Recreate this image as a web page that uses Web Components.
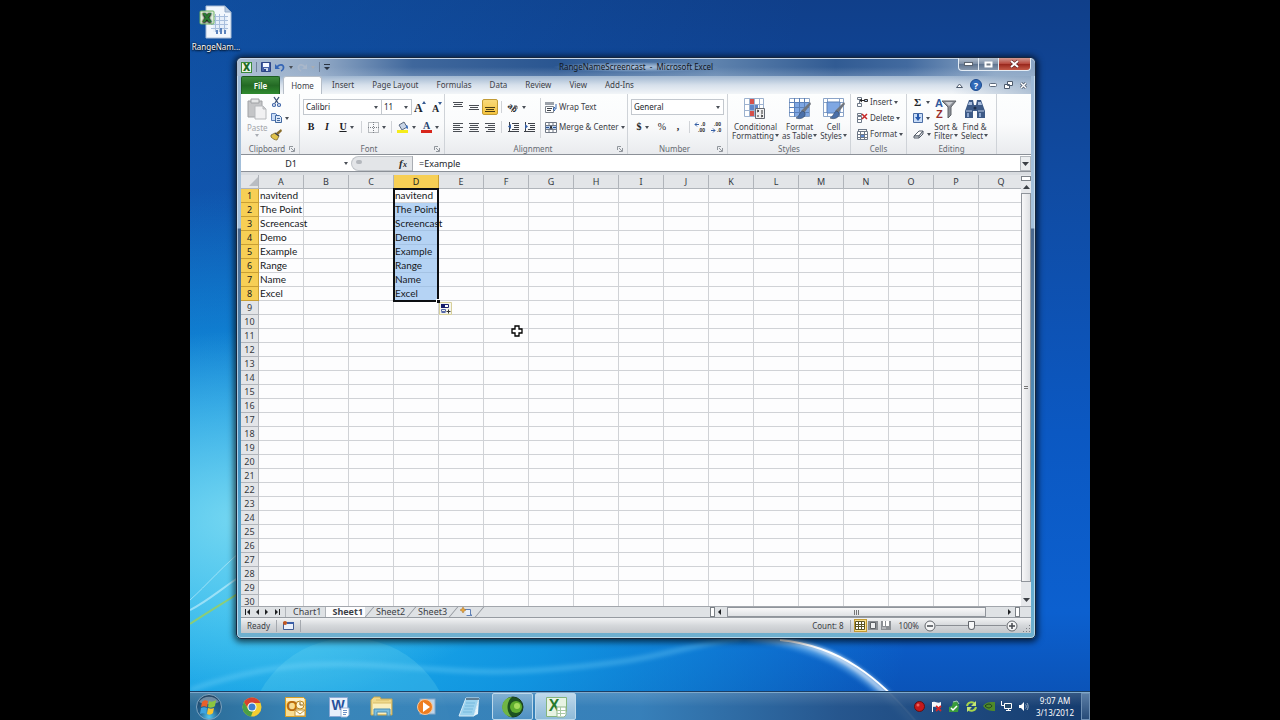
<!DOCTYPE html>
<html lang="en">
<head>
<meta charset="utf-8">
<meta name="viewport" content="width=device-width, initial-scale=1">
<title>RangeNameScreencast - Microsoft Excel</title>
<style>
html, body {
  height: 100%;
  margin: 0;
  background: #000;
  overflow: hidden;
}
body {
  display: flex;
  justify-content: center;
  font-family: "Noto Sans", "Open Sans", sans-serif;
  font-size: 8px;
  line-height: 10px;
  color: #3c4046;
}
</style>
</head>
<body>
<desk-top>
  <desk-shortcut icon="xlsfile">RangeNam...</desk-shortcut>
  <app-window slot="window">
    <title-bar slot="title">RangeNameScreencast &nbsp;-&nbsp; Microsoft Excel</title-bar>
    <ribbon-tabs></ribbon-tabs>
    <excel-ribbon></excel-ribbon>
    <formula-bar></formula-bar>
    <sheet-grid></sheet-grid>
    <sheet-tabs></sheet-tabs>
    <status-bar></status-bar>
  </app-window>
  <task-bar slot="taskbar"></task-bar>
</desk-top>

<script>
// name: [width, height, svg body]
const lines = (color, ...rows) => `<path stroke="${color}" fill="none" d="${rows.join("")}"/>`;
const icons = {
  caret: [4, 3, `<path d="M0 0h4L2 3z" fill="#4a4f57"/>`],
  caretPale: [4, 3, `<path d="M0 0h4L2 3z" fill="#a9adb3"/>`],
  xlsfile: [34, 36, `<path d="M7 2h19l6 6v26H7z" fill="#f2f7fd" stroke="#a9bdd6"/><path d="M26 2v6h6z" fill="#b9cbe2" stroke="#94abc8"/>
    <path d="M14 12h14v16H14z" fill="#e6effa"/>${lines("#a9bfdd", "M12 12.500h17M12 16.500h17M12 20.500h17M12 24.500h17M16.500 10v18M20.500 10v18M25.500 10v18")}
    <path d="M17 30v-4h2v4M21 30v-6h2v6M25 30v-4h2v4" fill="#5b83bd"/>
    <rect x="1" y="7" width="14" height="13" rx="1" fill="#e4f3de" stroke="#6aae60"/><text x="8" y="18" font-size="13" font-weight="900" text-anchor="middle" fill="#2c7a33">X</text>`],
  excel: [11, 11, `<rect x=".5" y=".5" width="10" height="10" fill="#e9f4e4" stroke="#3b8a3b"/><text x="5.500" y="9" font-size="10" font-weight="900" text-anchor="middle" fill="#1d6a24">X</text>`],
  save: [10, 10, `<path d="M.5.5h9v9h-9z" fill="#4661a8" stroke="#2d4585"/><path d="M2 1h6v4H2z" fill="#f4f8ff"/><path d="M3 6h4v3H3z" fill="#cdd7ea"/><path d="M3 7h2v2H3z" fill="#2d4585"/>`],
  undo: [10, 9, `<path d="M2 4c2-3 7-3 6.500 1-.2 1.500-1 2.500-2.500 3" fill="none" stroke="#3566b5" stroke-width="1.800"/><path d="M0 1v5h5z" fill="#3566b5"/>`],
  redo: [10, 9, `<path d="M8 4c-2-3-7-3-6.500 1 .2 1.500 1 2.500 2.500 3" fill="none" stroke="#a9b7ca" stroke-width="1.800"/><path d="M10 1v5H5z" fill="#a9b7ca"/>`],
  customize: [6, 6, `<path d="M0 0h6v1H0zM0 3h6L3 6z" fill="#2a3442"/>`],
  paste: [20, 22, `<path d="M1 3h14v16H1z" fill="#c4c5c7" stroke="#a0a2a5"/><path d="M4 1h8v4H4z" fill="#e6e7e8" stroke="#a0a2a5"/><path d="M8 8h8l3 3v10H8z" fill="#f1f1f2" stroke="#b7b9bc"/><path d="M16 8v3h3z" fill="#cfd0d2" stroke="#b7b9bc"/>`],
  cut: [9, 10, `<path d="M2 0l4 6M7 0L3 6" stroke="#3a4f74" stroke-width="1.300"/><circle cx="2" cy="8" r="1.500" fill="none" stroke="#3a61a6" stroke-width="1.200"/><circle cx="7" cy="8" r="1.500" fill="none" stroke="#3a61a6" stroke-width="1.200"/>`],
  copy: [11, 10, `<path d="M.5.500h4l2 2v5h-6z" fill="#c9dcf6" stroke="#5c7fb8"/><path d="M4.500 2.500h4l2 2v5h-6z" fill="#dbe7f8" stroke="#41689f"/><path d="M6 5.500h3M6 7.500h3" stroke="#41689f"/>`],
  brush: [11, 11, `<path d="M10 0l1 2-4 4-2-2z" fill="#8a6d2a"/><path d="M0 6l4-2 4 3-2 4c-2 0-4-1-6-3z" fill="#e0c24b" stroke="#7c6a30" stroke-width=".8"/><path d="M4 4l4 3" stroke="#444" stroke-width="1.500"/>`],
  launcher: [6, 6, `<path d="M.5 4V.5H4M5.500 2v3.500H2M2 2l3 3" fill="none" stroke="#868b92" stroke-width=".9"/>`],
  grow: [12, 12, `<text x="0" y="11" font-size="12" font-weight="700" font-family="Liberation Serif, serif" fill="#22262b">A</text><path d="M8 3l2-3 2 3z" fill="#355a92"/>`],
  shrink: [11, 12, `<text x="1" y="11" font-size="10" font-weight="700" font-family="Liberation Serif, serif" fill="#22262b">A</text><path d="M7 1h4L9 4z" fill="#355a92"/>`],
  border: [11, 11, `<path d="M.5.500h10v10H.5zM5.500 0v11M0 5.500h11" fill="none" stroke="#7b8087" stroke-dasharray="1 1"/>`],
  fill: [12, 12, `<path d="M2 4l5-3 3 5-5 3z" fill="#c7d4e6" stroke="#5c6b80"/><path d="M9 4c2 0 2 2 2 4l-2-1z" fill="#3d6fbb"/><path d="M0 9h11v3H0z" fill="#f5ec1c"/>`],
  fontcolor: [11, 12, `<text x="5.500" y="8" font-size="10" font-weight="700" font-family="Liberation Serif, serif" text-anchor="middle" fill="#27456f">A</text><path d="M0 9h11v3H0z" fill="#d8261c"/>`],
  top: [10, 10, lines("#4a4e54", "M0 .5h10M1 2.500h8M0 4.500h10")],
  middle: [10, 10, lines("#4a4e54", "M0 3.500h10M1 5.500h8M0 7.500h10")],
  bottom: [10, 10, lines("#4a3c14", "M0 5.500h10M1 7.500h8M0 9.500h10")],
  left: [10, 10, lines("#4a4e54", "M0 1.500h10M0 3.500h7M0 5.500h10M0 7.500h7M0 9.500h9")],
  center: [10, 10, lines("#4a4e54", "M0 1.500h10M1 3.500h8M0 5.500h10M1 7.500h8M0 9.500h10")],
  right: [10, 10, lines("#4a4e54", "M0 1.500h10M3 3.500h7M0 5.500h10M3 7.500h7M1 9.500h9")],
  orient: [11, 10, `<text x="0" y="8" font-size="8" font-weight="700" transform="rotate(40 4 5)" fill="#2c3036">ab</text><path d="M3 10l6-6M9 4v3M9 4H6" stroke="#666" fill="none"/>`],
  outdent: [11, 10, lines("#3d4148", "M4 1.500h7M6 3.500h5M6 5.500h5M4 7.500h7M0 9.500h11M1.500 0v9") + `<path d="M0 4.500L3 2v5z" fill="#355fa5"/>`],
  indent: [11, 10, lines("#3d4148", "M4 1.500h7M6 3.500h5M6 5.500h5M4 7.500h7M0 9.500h11M1.500 0v9") + `<path d="M4 4.500L1 2v5z" fill="#355fa5"/>`],
  wrap: [12, 11, `<path d="M0 0h9v3H0z" fill="#9ca2aa"/><path d="M.5 4.500h8v6h-8z" fill="#fff" stroke="#7c838c"/><path d="M2 6.500h5M2 8.500h4" stroke="#3c4046"/><path d="M11 2v5H8M10 5L8 7l2 2" fill="none" stroke="#3667b1"/>`],
  merge: [12, 11, `<path d="M.5.5h11v10H.5z" fill="#fff" stroke="#717985"/><path d="M0 3.500h12M0 7.500h12M4 1v2M8 1v2M4 8v2M8 8v2" stroke="#717985"/><path d="M1 4h10v3H1z" fill="#bcd2ef"/><path d="M1 5.500h3M8 5.500h3" stroke="#244f94"/><path d="M5 7l1-3 1 3" stroke="#222" fill="none"/>`],
  moredec: [12, 12, `<path d="M0 3.500h4M2 1.500L0 3.500l2 2" stroke="#355fa5" fill="none"/><g font-family="Liberation Sans, sans-serif" font-size="5" font-weight="700" fill="#222"><text x="6" y="5">.0</text><text x="3" y="11">.00</text></g>`],
  lessdec: [12, 12, `<path d="M0 9.500h4M2 7.500l2 2-2 2" stroke="#355fa5" fill="none"/><g font-family="Liberation Sans, sans-serif" font-size="5" font-weight="700" fill="#222"><text x="3" y="5">.00</text><text x="6" y="11">.0</text></g>`],
  conditional: [22, 21, `<path d="M.5.500h19v18H.5z" fill="#fff" stroke="#9db2cf"/><path d="M5 1h6v5H5zM5 12h6v6H5z" fill="#d5504a"/><path d="M5 6h9v6H5z" fill="#5f86c9"/>${lines("#9db2cf", "M0 6.500h20M0 12.500h20M5.500 0v19M10.500 0v19M15.500 0v19")}<path d="M11.500 10.500h9v10h-9z" fill="#f1f1f1" stroke="#656a72"/><path d="M13 12l2 1-2 1M17 13h2M17 15h2M13 18h2M17 17l2 1-2 1" stroke="#333" fill="none"/>`],
  table: [22, 21, `<path d="M.5.500h20v18H.5z" fill="#fff" stroke="#8ba4c8"/><path d="M5 5h15v13H5z" fill="#7fa7e3"/>${lines("#5b80b8", "M0 4.500h20M0 9.500h20M0 14.500h20M5.500 0v19M10.500 0v19M15.500 0v19")}<path d="M21 4l1 2-7 9-3-2z" fill="#70757d"/><path d="M14 13c-3 0-3 5-7 7 5 2 10-1 9-5z" fill="#4a6fa8" stroke="#3a4a60" stroke-width=".6"/>`],
  cellstyle: [22, 21, `<path d="M.5.500h20v18H.5z" fill="#fff" stroke="#8ba4c8"/><path d="M0 4.500h20M0 14.500h20M4.500 0v19M16.500 0v19" stroke="#8ba4c8"/><path d="M4 4h13v11H4z" fill="#7fa7e3" stroke="#5b80b8"/><path d="M21 4l1 2-7 9-3-2z" fill="#70757d"/><path d="M14 13c-3 0-3 5-7 7 5 2 10-1 9-5z" fill="#4a6fa8" stroke="#3a4a60" stroke-width=".6"/>`],
  insert: [11, 10, `<path d="M.5.500h4v2h-4zM.5 6.500h4v3h-4z" fill="#fff" stroke="#6d7887"/><path d="M2.500 2v5" stroke="#6d7887"/><path d="M7.500 2.500h3v2h-3z" fill="#bcd2ef" stroke="#333"/><path d="M3 3.500h4M5 2L3 3.500 5 5" fill="none" stroke="#222"/>`],
  delete: [11, 10, `<path d="M.5.500h4v2h-4zM.5 3.500h4v3h-4zM.5 6.500h4v3h-4z" fill="#fff" stroke="#6d7887"/><path d="M5 1l5 5M10 1L5 6" stroke="#c62626" stroke-width="1.500"/>`],
  format: [11, 11, `<path d="M.5 2.500h10v8H.5z" fill="#fff" stroke="#6d7887"/><path d="M0 5.500h11M0 8.500h11M3.500 2v9M7.500 2v9M1 .5h9M1.500 0v2M9.500 0v2" stroke="#6d7887"/><path d="M4 6h3v2H4z" fill="#5e8ad0"/>`],
  sum: [9, 10, `<text x="0" y="9" font-size="11" font-weight="700" font-family="Liberation Serif, serif" fill="#22262b">Σ</text>`],
  filldown: [10, 10, `<path d="M.5.500h9v9h-9z" fill="#c8dcf7" stroke="#4a6da5"/><path d="M4 1h2v3h2L5 8 2 4h2z" fill="#2659ad"/>`],
  erase: [11, 9, `<path d="M1 6l5-5h4L6 6z" fill="#fff" stroke="#555d69"/><path d="M1 6h5v2H1zM6 6l4-5v3L6 8" fill="#e3e6ea" stroke="#555d69"/>`],
  sort: [22, 21, `<path d="M7 3h14l-5 6v8l-3 3V9z" fill="#8c9097" stroke="#5f6369"/><path d="M10 4h8l-4 4z" fill="#c9ccd1"/><text x="0" y="9" font-size="11" font-weight="700" font-family="Liberation Sans, sans-serif" fill="#31599c">A</text><text x="1" y="20" font-size="11" font-weight="700" font-family="Liberation Sans, sans-serif" fill="#99302d">Z</text>`],
  find: [20, 21, `<path d="M4 2h4l1 5h2l1-5h4l4 11v7h-8v-7h-4v7H0v-7z" fill="#3e5b87"/><path d="M4 4h3v3H3zM13 4h3l1 3h-4z" fill="#a8bdde"/><path d="M1 13h6M13 13h6" stroke="#bccbe3"/><path d="M2 15h2v4H2zM14 15h2v4h-2z" fill="#8ba5ce"/><circle cx="10" cy="10" r="1.500" fill="#1d2f4c"/>`],
  chevronUp: [7, 5, `<path d="M.5 4.500L3.500 1l3 3.500z" fill="#fff" stroke="#4d5a6c"/>`],
  help: [12, 12, `<circle cx="6" cy="6" r="5.500" fill="#2f69b8" stroke="#1c4a8e"/><text x="6" y="9.500" font-size="9" font-weight="700" text-anchor="middle" fill="#fff">?</text>`],
  docMin: [8, 4, `<rect x=".5" y=".5" width="7" height="3" rx="1" fill="#fff" stroke="#5c6a7d"/>`],
  docRestore: [9, 8, `<path d="M3.500.5h5v4h-5zM.5 3.500h5v4h-5z" fill="#fff" stroke="#4d5a6c"/>`],
  docClose: [7, 7, `<path d="M1 1l5 5M6 1L1 6" stroke="#4d5a6c" stroke-width="3"/><path d="M1 1l5 5M6 1L1 6" stroke="#fff" stroke-width="1.400"/>`],
  winMin: [9, 4, `<rect x=".5" y=".5" width="8" height="3" fill="#fff" stroke="#5b6470"/>`],
  winMax: [9, 7, `<path d="M1.500 1.500h6v4h-6z" fill="#717a86" stroke="#fff" stroke-width="2"/>`],
  winClose: [9, 8, `<path d="M1 1l7 6M8 1L1 7" stroke="#5b2020" stroke-width="3"/><path d="M1 1l7 6M8 1L1 7" stroke="#fff" stroke-width="2"/>`],
  fx: [10, 10, `<text x="0" y="8" font-size="11" font-weight="700" font-style="italic" font-family="Liberation Serif, serif" fill="#26292d">f</text><text x="4" y="8" font-size="8" font-weight="700" font-style="italic" font-family="Liberation Serif, serif" fill="#26292d">x</text>`],
  corner: [9, 9, `<path d="M9 0v9H0z" fill="#b9bdc2"/>`],
  autofill: [13, 13, `<path d="M.5.500h12v12H.5z" fill="#f6f6ee" stroke="#d6cf9a"/><path d="M2.500 2.500h3v3h-3zM5.500 2.500h4v3h-4z" fill="#fff" stroke="#1b246e"/><path d="M2 2h4v4H2z" fill="#141c6c"/><path d="M2.500 7.500h4v2h-4zM2.500 10.500h4" fill="none" stroke="#5768a7"/><path d="M9.500 7.500v4M7.500 9.500h4" stroke="#333"/>`],
  cross: [12, 12, `<path d="M4 1h4v3h3v4H8v3H4V8H1V4h3z" fill="#fff" stroke="#000" stroke-width="1.300"/>`],
  first: [6, 6, `<path d="M0 0h1v6H0zM5 0v6L2 3z" fill="#1d1f22"/>`],
  prev: [4, 6, `<path d="M3 0v6L0 3z" fill="#1d1f22"/>`],
  next: [4, 6, `<path d="M0 0v6l3-3z" fill="#1d1f22"/>`],
  last: [6, 6, `<path d="M5 0h1v6H5zM1 0v6l3-3z" fill="#1d1f22"/>`],
  up: [7, 4, `<path d="M0 4h7L3.500 0z" fill="#3c4046"/>`],
  down: [7, 4, `<path d="M0 0h7L3.500 4z" fill="#3c4046"/>`],
  newsheet: [13, 10, `<path d="M4.500 2.500h6v6h-4" fill="#e9f0fb" stroke="#5e7fb4"/><path d="M10 9l2-2v2z" fill="#5e7fb4"/><path d="M3 0l1 2 2 1-2 1-1 2-1-2-2-1 2-1z" fill="#e6a33c" stroke="#a86d1a" stroke-width=".5"/>`],
  macro: [11, 9, `<path d="M.5 1.500h10v7H.5z" fill="#eaf0fb" stroke="#405c93"/><path d="M4 1h7v2H4z" fill="#3a5ea8"/><circle cx="2" cy="2" r="2" fill="#c1551f"/>`],
  normal: [10, 9, `<path d="M.5.500h9v8h-9z" fill="#fff" stroke="#5b5423"/><path d="M0 3.500h10M0 5.500h10M3.500 0v9M6.500 0v9" stroke="#5b5423"/>`],
  layout: [10, 9, `<path d="M0 0h10v9H0z" fill="#8b8f94"/><path d="M2.500 1.500h5v6h-5z" fill="#eceef0" stroke="#5c6066"/>`],
  breaks: [10, 9, `<path d="M0 0h10v9H0z" fill="#8b8f94"/><path d="M2 0h2v5H2zM5 0h3v5H5z" fill="#fff"/><path d="M1 7h4" stroke="#d9dbde"/>`],
  minus: [12, 12, `<circle cx="6" cy="6" r="5" fill="#f4f5f6" stroke="#62666c"/><path d="M3 6h6" stroke="#44484e" stroke-width="1.500"/>`],
  plus: [12, 12, `<circle cx="6" cy="6" r="5" fill="#f4f5f6" stroke="#62666c"/><path d="M3 6h6M6 3v6" stroke="#44484e" stroke-width="1.500"/>`],
  grip: [8, 8, `<path d="M6 0h1v1H6zM3 3h1v1H3zM6 3h1v1H6zM0 6h1v1H0zM3 6h1v1H3zM6 6h1v1H6z" fill="#7c8086"/>`],
  start: [28, 28, `<defs><radialGradient id="o" cx=".5" cy=".9" r=".9"><stop offset="0" stop-color="#53c7ef"/><stop offset=".45" stop-color="#22618f"/><stop offset="1" stop-color="#24435f"/></radialGradient></defs>
    <circle cx="14" cy="14" r="12.500" fill="url(#o)" stroke="#7da3c0"/><path d="M4 9c4-7 16-7 20 0-6 3-14 3-20 0z" fill="#fff" opacity=".35"/>
    <path d="M7 9c2-2 4-2 6-1l-1 6c-2-1-4-1-6 0z" fill="#e8602b"/><path d="M14 8c2 1 4 1 7-1l-1 6c-2 2-5 2-7 1z" fill="#8cc63f"/><path d="M6 15c2-1 4-1 6 0l-1 6c-2-1-4-1-6 0z" fill="#3fa4e0"/><path d="M13 15c2 1 4 1 6 0l-1 5c-2 2-4 2-6 1z" fill="#fcc52c"/>`],
  chrome: [20, 20, `<circle cx="10" cy="10" r="9.500" fill="#f3cd33"/><path d="M10 .5A9.500 9.500 0 0 1 18.500 6H10a4 4 0 0 0-4 6L2 5A9.500 9.500 0 0 1 10 .5z" fill="#d8402f"/><path d="M2 5l4 7a4 4 0 0 0 5 2l-2 5.500A9.500 9.500 0 0 1 2 5z" fill="#4a9f45"/><circle cx="10" cy="10" r="4.500" fill="#fff"/><circle cx="10" cy="10" r="3.500" fill="#3e7fd0"/>`],
  outlook: [22, 22, `<path d="M1.500 1.500h18l2 2v17h-20z" fill="#f8dc92" stroke="#d89f26"/><path d="M2 2h18v3H2z" fill="#fdf0c8"/><text x="8" y="15" font-size="15" font-weight="900" text-anchor="middle" fill="#b96c0d">O</text><circle cx="16" cy="9" r="4" fill="#fff4d2" stroke="#bb8822"/><path d="M16 6v3h3" stroke="#8a6318" fill="none"/><path d="M11 14h10v6H11z" fill="#fffbea" stroke="#c3963b"/><path d="M11 14l5 4 5-4" fill="none" stroke="#c3963b"/>`],
  word: [22, 22, `<path d="M1.500 1.500h18v14l-5 5h-13z" fill="#e8f0fb" stroke="#8ba8d4"/><text x="10" y="14" font-size="14" font-weight="900" text-anchor="middle" fill="#26509c">W</text><path d="M13 12h8v7l-2 2h-6z" fill="#fff" stroke="#9db4d8"/><path d="M15 14.500h4M15 16.500h4M15 18.500h3" stroke="#6f91c5"/>`],
  explorer: [24, 22, `<path d="M1 4l3-3h6l1 2h11v16H1z" fill="#efd98b" stroke="#c7a751"/><path d="M3 7h18v11H3z" fill="#faefbd"/><path d="M3 7h18M6 4h13" stroke="#d7bd6b"/><path d="M4 20v-7h16v7h-3v-4H7v4z" fill="#79bddf" stroke="#4c8eb3"/>`],
  media: [20, 20, `<rect x="4" y="2" width="15" height="15" fill="#bdd5ea" stroke="#86a9c9"/><circle cx="9" cy="10" r="7.500" fill="#ee7d1f" stroke="#f7c79a"/><path d="M7 5l7 5-7 5z" fill="#fff"/>`],
  notepad: [22, 22, `<path d="M8 2h13l-5 18H1z" fill="#9bd2ee" stroke="#d8edf7"/><path d="M8 2h13v2H8z" fill="#5f7d92"/><path d="M21 3l-1 15-4 2z" fill="#e9f5fb"/><path d="M8 7h9M7 10h9M6 13h9M5 16h9" stroke="#6cb2d8" stroke-width=".8"/>`],
  camtasia: [22, 22, `<circle cx="11" cy="11" r="10" fill="#1d5320" stroke="#183d1a"/><path d="M10 1a10 10 0 0 0 0 20C4 16 4 6 10 1z" fill="#6fb544"/><circle cx="14" cy="11" r="6" fill="#5fae2f"/><circle cx="15" cy="10" r="3" fill="#a5dc5c"/>`],
  exceltask: [22, 22, `<path d="M1.500 1.500h20v14l-5 5h-15z" fill="#e7f3e3" stroke="#84b57d"/><text x="9" y="15" font-size="16" font-weight="900" text-anchor="middle" fill="#277a2e">X</text><path d="M12 11h9v8l-2 2h-7z" fill="#fff" stroke="#8fb68a"/><path d="M12 14.500h9M12 17.500h8M15.500 11v9" stroke="#a9c9a5"/>`],
  record: [11, 11, `<circle cx="5.500" cy="5.500" r="5" fill="#c5191b" stroke="#5e1014"/><circle cx="4" cy="4" r="1.500" fill="#ea6560"/>`],
  flag: [11, 11, `<path d="M1.500 1v10" stroke="#fff"/><path d="M2 1c3-1 4 2 8 0v5c-4 2-5-1-8 0z" fill="#f5f7f9"/><path d="M5 5l5 5M10 5l-5 5" stroke="#d22525" stroke-width="1.800"/>`],
  usb: [12, 12, `<path d="M1 6l3-1 1-4h4l2 4-1 6H1z" fill="#3a9c3b"/><path d="M5 1l4-1 2 3" fill="none" stroke="#a9d7ac"/><path d="M3 7l2 2 4-4" stroke="#fff" fill="none" stroke-width="1.500"/>`],
  sync: [11, 11, `<path d="M1 5a4.500 4.500 0 0 1 8-2M10 6a4.500 4.500 0 0 1-8 2" fill="none" stroke="#a8d64a" stroke-width="2"/><path d="M10 0v5H5zM1 11V6h5z" fill="#c4e577"/>`],
  nvidia: [12, 9, `<path d="M0 4c3-4 6-4 12-4v9C6 9 3 8 0 4z" fill="#4f8a2a"/><path d="M2 4c3-3 6-2 7 0-2 3-5 2-7 0z" fill="none" stroke="#1d3f1e"/>`],
  network: [11, 11, `<path d="M3.500 2.500h7v5h-7z" fill="#274a6c" stroke="#fff"/><path d="M5 9.500h5M7.500 8v2M.5 0v4.500h3" stroke="#fff" fill="none"/>`],
  sound: [10, 11, `<path d="M1 4h2l3-3v9L3 7H1z" fill="#fff"/><path d="M7.500 3.500c1 1 1 3 0 4M9 2c1.500 2 1.500 5 0 7" stroke="#b9c7d6" fill="none" stroke-width=".8"/>`],
};

class AppElement extends HTMLElement {
  constructor() {
    super();
    this.attachShadow({ mode: "open" });
  }

  connectedCallback() {
    this.shadowRoot.innerHTML = this.render();
  }

  render() {
    return `<slot></slot>`;
  }
}

class AppIcon extends AppElement {
  render() {
    const [w, h, body] = icons[this.getAttribute("name")];
    return `
<style>
:host { display: inline-flex; flex: none; }
svg { display: block; overflow: visible; }
</style>
<svg width="${w}" height="${h}" viewBox="0 0 ${w} ${h}" aria-hidden="true">${body}</svg>`;
  }
}
customElements.define("app-icon", AppIcon);

class DeskTop extends AppElement {
  render() {
    return `
<style>
:host {
  display: flex;
  flex-direction: column;
  position: relative;
  height: 100vh;
  aspect-ratio: 5 / 4;
  overflow: hidden;
  background:
    radial-gradient(ellipse 34% 26% at 6% 72%, #8ce4f4cc, transparent),
    radial-gradient(ellipse 72% 58% at 8% 84%, #1db2ec, #12a2e8cc 45%, transparent),
    linear-gradient(100deg, #0f64bd66, transparent 60%),
    linear-gradient(#103f8a, #104ba2 25%, #0b58c2 60%, #0c60cf 85%, #0a4fb0);
}
.wallpaper {
  position: absolute;
  inset: 0;
  width: 100%;
  height: 100%;
}
.icons { flex: 1; position: relative; padding: 4px 2px; }
.windows { position: absolute; inset: 57px 54px 81px 46px; display: flex; }
.pointer { position: absolute; left: 321px; top: 325px; }
</style>
<svg class="wallpaper" viewBox="0 0 900 720" preserveAspectRatio="none" aria-hidden="true">
  <defs>
    <filter id="soft"><feGaussianBlur stdDeviation="2"/></filter>
    <linearGradient id="arc"><stop offset="0" stop-color="#fff" stop-opacity=".1"/><stop offset=".5" stop-color="#fff"/><stop offset="1" stop-color="#fff" stop-opacity=".5"/></linearGradient>
  </defs>
  <circle cx="160" cy="740" r="102" fill="#7fe2ee" opacity=".2"/>
  <path d="M500 632c130 0 180 40 230 100" fill="none" stroke="#8fd0ff" stroke-width="10" opacity=".4" filter="url(#soft)"/>
  <path d="M560 638c80 0 122 36 170 92" fill="none" stroke="url(#arc)" stroke-width="4" filter="url(#soft)"/>
  <path d="M590 640c60 6 100 38 138 84" fill="none" stroke="#fff" stroke-width="2"/>
  <path d="M0 690c140-50 220-10 350-20s120-20 200-32" fill="none" stroke="#8fe2ff" stroke-width="5" opacity=".3" filter="url(#soft)"/>
  <path d="M0 624c18-12 32-20 60-38" fill="none" stroke="#9ccf5a" stroke-width="2" opacity=".8"/>
  <path d="M0 610c20-10 34-24 60-40" fill="none" stroke="#e6fbff" stroke-width="2" opacity=".5"/>
  <path d="M0 600c16-14 34-36 60-56" fill="none" stroke="#e6fbff" opacity=".5"/>
</svg>
<div class="icons"><slot></slot></div>
<div class="windows"><slot name="window"></slot></div>
<slot name="taskbar"></slot>
<app-icon class="pointer" name="cross"></app-icon>`;
  }
}
customElements.define("desk-top", DeskTop);

class DeskShortcut extends AppElement {
  render() {
    return `
<style>
:host { display: block; width: 48px; }
a {
  display: flex;
  flex-direction: column;
  align-items: center;
  gap: 2px;
  color: #fff;
  text-decoration: none;
  text-shadow: 0 1px 2px #000, 0 0 2px #000;
}
</style>
<a href="#file"><app-icon name="${this.getAttribute("icon")}"></app-icon><span><slot></slot></span></a>`;
  }
}
customElements.define("desk-shortcut", DeskShortcut);

class AppWindow extends AppElement {
  render() {
    return `
<style>
:host {
  display: flex;
  flex-direction: column;
  flex: 1;
  min-width: 0;
  box-sizing: border-box;
  padding: 0 4px 5px;
  border: 1px solid #16263c;
  border-radius: 6px 6px 5px 5px;
  background:
    linear-gradient(#0000 2px, #0000 170px, #0c2c5a99 171px, #1c78a800 80%),
    linear-gradient(#9db9d6, #a6c2dc 30%, #4a9fd0 70%, #6fb0cf);
  box-shadow: inset 0 0 0 1px #dcecf8aa, 0 1px 6px 2px #000a;
}
::slotted(sheet-grid) { flex: 1; min-height: 0; }
</style>
<slot name="title"></slot>
<slot></slot>`;
  }
}
customElements.define("app-window", AppWindow);

class TitleBar extends AppElement {
  render() {
    return `
<style>
:host {
  display: flex;
  align-items: center;
  height: 18px;
  margin: 0 -4px;
  padding: 0 4px;
  border-radius: 5px 5px 0 0;
  box-shadow: inset 0 1px #c6d6e8;
  color: #10151c;
  background:
    linear-gradient(transparent 50%, #a9bdd555),
    linear-gradient(90deg, #aebfd3, #94abc7 10%, #3f679c 22%, #2a5691 40%, #5e82ad 60%, #315b93 75%, #426a9f 84%, #8aa5c4 95%);
}
.quick { display: flex; align-items: center; gap: 4px; flex: 1; }
.sep { width: 1px; height: 10px; background: #6e8099; }
h1 {
  margin: 0;
  padding: 0 6px;
  font: inherit;
  background: radial-gradient(closest-side, #c4d5e8dd, #8faccd88 70%, transparent);
}
.caption { flex: 1; display: flex; justify-content: flex-end; align-self: flex-start; }
button { display: flex; align-items: center; justify-content: center; border: 0; padding: 0; background: none; }
.caption button {
  width: 20px;
  height: 13px;
  border: 1px solid #e3ecf5;
  border-top: 0;
  border-right: 0;
  background: linear-gradient(#b4c0cf, #7d8ea5 50%, #5e738f 51%, #8798ad);
}
.caption button:first-child { border-radius: 0 0 0 4px; }
.caption .close {
  width: 33px;
  border-right: 1px solid #e3ecf5;
  border-radius: 0 0 4px;
  background: linear-gradient(#d29a92, #b5453a 50%, #98261c 51%, #c35a48);
}
</style>
<div class="quick">
  <app-icon name="excel"></app-icon><span class="sep"></span>
  <button aria-label="Save"><app-icon name="save"></app-icon></button>
  <button aria-label="Undo"><app-icon name="undo"></app-icon></button><app-icon name="caret"></app-icon>
  <button aria-label="Redo"><app-icon name="redo"></app-icon></button><app-icon name="caretPale"></app-icon>
  <span class="sep"></span>
  <button aria-label="Customize Quick Access Toolbar"><app-icon name="customize"></app-icon></button>
</div>
<h1><slot></slot></h1>
<div class="caption">
  <button aria-label="Minimize"><app-icon name="winMin"></app-icon></button>
  <button aria-label="Maximize"><app-icon name="winMax"></app-icon></button>
  <button class="close" aria-label="Close"><app-icon name="winClose"></app-icon></button>
</div>`;
  }
}
customElements.define("title-bar", TitleBar);

class RibbonTabs extends AppElement {
  render() {
    const tabs = ["Insert", "Page Layout", "Formulas", "Data", "Review", "View", "Add-Ins"];
    return `
<style>
:host {
  display: flex;
  align-items: stretch;
  height: 18px;
  background: linear-gradient(90deg, transparent 90%, #7f9bbb88), linear-gradient(#9fb6d0, #d6e0eb 50%, #f2f5f8);
}
nav { display: flex; flex: 1; }
button { font: inherit; color: inherit; border: 0; padding: 0 9px; background: none; display: flex; align-items: center; }
.file {
  width: 39px;
  justify-content: center;
  color: #fff;
  font-weight: 600;
  border: 1px solid #1d5c20;
  border-bottom: 0;
  border-radius: 2px 2px 0 0;
  background: linear-gradient(#3d8a3c, #236a24 50%, #2f8a2f);
}
.home {
  width: 39px;
  margin: 0 1px 0 3px;
  justify-content: center;
  border: 1px solid #b6bec8;
  border-bottom: 0;
  border-radius: 3px 3px 0 0;
  background: #fdfefe;
}
.tools { display: flex; align-items: center; gap: 7px; padding-right: 4px; }
.tools button { padding: 0; }
</style>
<nav>
  <button class="file">File</button><button class="home">Home</button>
  ${tabs.map((tab) => `<button>${tab}</button>`).join("")}
</nav>
<div class="tools">
  <button aria-label="Minimize the Ribbon"><app-icon name="chevronUp"></app-icon></button>
  <button aria-label="Help"><app-icon name="help"></app-icon></button>
  <button aria-label="Minimize Workbook"><app-icon name="docMin"></app-icon></button>
  <button aria-label="Restore Workbook"><app-icon name="docRestore"></app-icon></button>
  <button aria-label="Close Workbook"><app-icon name="docClose"></app-icon></button>
</div>`;
  }
}
customElements.define("ribbon-tabs", RibbonTabs);

class RibbonGroup extends AppElement {
  render() {
    return `
<style>
:host {
  display: flex;
  flex-direction: column;
  flex: none;
  box-sizing: border-box;
  border-right: 1px solid #cfd3d8;
}
.body { flex: 1; min-height: 0; display: flex; padding: 0 0 0 3px; }
:host([inset]) .body { padding-left: 5px; }
footer { display: flex; height: 11px; align-items: center; padding: 0 4px; color: #666b72; }
footer span { flex: 1; text-align: center; }
</style>
<div class="body"><slot></slot></div>
<footer><span>${this.getAttribute("label")}</span>${this.hasAttribute("launcher") ? `<app-icon name="launcher"></app-icon>` : ""}</footer>`;
  }
}
customElements.define("ribbon-group", RibbonGroup);

// Icon button: small by default, "large" stacks the icon over its label
class RibbonButton extends AppElement {
  render() {
    const caret = this.hasAttribute("caret") ? `<app-icon name="caret"></app-icon>` : "";
    const icon = this.getAttribute("icon");
    return `
<style>
:host { display: inline-flex; flex: none; min-width: 16px; height: 16px; }
:host([caret]) { min-width: 23px; }
:host([active]) button { background: linear-gradient(#f9d97a, #f5c43f); border-color: #c29b35; }
:host([large]) { height: auto; min-width: 0; }
:host([large]) button { flex-direction: column; justify-content: flex-start; gap: 3px; padding: 3px 0 0; line-height: 9px; }
:host([disabled]) { color: #a4a7ab; }
:host([text]) button { justify-content: flex-start; gap: 2px; }
button {
  flex: 1;
  display: flex;
  align-items: center;
  justify-content: center;
  gap: 3px;
  padding: 0;
  border: 1px solid transparent;
  border-radius: 2px;
  background: none;
  font: inherit;
  color: inherit;
  white-space: nowrap;
}
</style>
<button${this.hasAttribute("aria-label") ? ` aria-label="${this.getAttribute("aria-label")}"` : ""}>${icon ? `<app-icon name="${icon}"></app-icon>` : ""}<slot></slot>${caret}</button>`;
  }
}
customElements.define("ribbon-button", RibbonButton);

class DropDown extends AppElement {
  render() {
    return `
<style>
:host { display: flex; position: relative; height: 16px; box-sizing: border-box; border: 1px solid #c3c8ce; background: #fff; color: #22262b; }
select { flex: 1; width: 100%; appearance: none; border: 0; padding: 0 2px; background: none; font: inherit; color: inherit; }
app-icon { position: absolute; right: 3px; top: 6px; pointer-events: none; }
</style>
<select aria-label="${this.getAttribute("label")}"><option>${this.textContent}</option></select><app-icon name="caret"></app-icon>`;
  }
}
customElements.define("drop-down", DropDown);

class ExcelRibbon extends AppElement {
  render() {
    return `
<style>
:host {
  display: flex;
  height: 60px;
  background: linear-gradient(#fdfefe, #fafbfc 50%, #e9ebee);
  border-bottom: 1px solid #8b9097;
}
.rows { display: flex; flex-direction: column; justify-content: space-between; height: 36px; padding-top: 5px; }
.three { height: 48px; padding: 0; align-items: flex-start; }
.row { display: flex; align-items: center; }
.sep { width: 1px; height: 12px; margin: 0 3px; background: #d0d3d7; }
.tall { height: 40px; margin: 4px 3px 0; }
.clipboard { width: 59px; }
.font { width: 145px; }
.alignment { width: 183px; }
.number { width: 100px; }
.styles { width: 123px; }
.cells { width: 56px; }
.editing { width: 90px; }
.paste { margin: 0 0 0 2px; }
.two { display: flex; flex-direction: column; align-items: center; }
.two span { display: flex; align-items: center; gap: 1px; }
.paste .two { gap: 2px; }
.family { width: 79px; }
.size { width: 31px; margin-left: -1px; }
.general { width: 93px; }
b, i, u, .sign { font-family: "Liberation Serif", serif; font-size: 10px; font-weight: 700; color: #1d2024; }
.sign { font-weight: 400; }
.large { display: flex; gap: 1px; align-items: flex-start; }
</style>
<ribbon-group class="clipboard" label="Clipboard" launcher>
  <ribbon-button class="paste" large disabled icon="paste"><span class="two">Paste<app-icon name="caretPale"></app-icon></span></ribbon-button>
  <div class="rows three">
    <ribbon-button icon="cut" aria-label="Cut"></ribbon-button>
    <ribbon-button icon="copy" caret aria-label="Copy"></ribbon-button>
    <ribbon-button icon="brush" aria-label="Format Painter"></ribbon-button>
  </div>
</ribbon-group>
<ribbon-group class="font" label="Font" launcher>
  <div class="rows">
    <div class="row">
      <drop-down class="family" label="Font">Calibri</drop-down><drop-down class="size" label="Font Size">11</drop-down>
      <ribbon-button icon="grow" aria-label="Increase Font Size"></ribbon-button><ribbon-button icon="shrink" aria-label="Decrease Font Size"></ribbon-button>
    </div>
    <div class="row">
      <ribbon-button><b>B</b></ribbon-button><ribbon-button><i>I</i></ribbon-button><ribbon-button caret><u>U</u></ribbon-button>
      <span class="sep"></span><ribbon-button icon="border" caret aria-label="Borders"></ribbon-button>
      <span class="sep"></span><ribbon-button icon="fill" caret aria-label="Fill Color"></ribbon-button><ribbon-button icon="fontcolor" caret aria-label="Font Color"></ribbon-button>
    </div>
  </div>
</ribbon-group>
<ribbon-group class="alignment" label="Alignment" inset launcher>
  <div class="rows">
    <div class="row">
      <ribbon-button icon="top" aria-label="Top Align"></ribbon-button><ribbon-button icon="middle" aria-label="Middle Align"></ribbon-button><ribbon-button icon="bottom" active aria-label="Bottom Align"></ribbon-button>
      <span class="sep"></span><ribbon-button icon="orient" caret aria-label="Orientation"></ribbon-button>
    </div>
    <div class="row">
      <ribbon-button icon="left" aria-label="Align Left"></ribbon-button><ribbon-button icon="center" aria-label="Center"></ribbon-button><ribbon-button icon="right" aria-label="Align Right"></ribbon-button>
      <span class="sep"></span><ribbon-button icon="outdent" aria-label="Decrease Indent"></ribbon-button><ribbon-button icon="indent" aria-label="Increase Indent"></ribbon-button>
    </div>
  </div>
  <span class="sep tall"></span>
  <div class="rows">
    <ribbon-button text icon="wrap">Wrap Text</ribbon-button>
    <ribbon-button text icon="merge" caret>Merge &amp; Center</ribbon-button>
  </div>
</ribbon-group>
<ribbon-group class="number" label="Number" launcher>
  <div class="rows">
    <div class="row"><drop-down class="general" label="Number Format">General</drop-down></div>
    <div class="row">
      <ribbon-button caret><b>$</b></ribbon-button><ribbon-button><span class="sign">%</span></ribbon-button><ribbon-button><b>,</b></ribbon-button>
      <span class="sep"></span><ribbon-button icon="moredec" aria-label="Increase Decimal"></ribbon-button><ribbon-button icon="lessdec" aria-label="Decrease Decimal"></ribbon-button>
    </div>
  </div>
</ribbon-group>
<ribbon-group class="styles" label="Styles">
  <div class="large">
    <ribbon-button large icon="conditional"><span class="two">Conditional<span>Formatting<app-icon name="caret"></app-icon></span></span></ribbon-button>
    <ribbon-button large icon="table"><span class="two">Format<span>as Table<app-icon name="caret"></app-icon></span></span></ribbon-button>
    <ribbon-button large icon="cellstyle"><span class="two">Cell<span>Styles<app-icon name="caret"></app-icon></span></span></ribbon-button>
  </div>
</ribbon-group>
<ribbon-group class="cells" label="Cells" inset>
  <div class="rows three">
    <ribbon-button text icon="insert" caret>Insert</ribbon-button>
    <ribbon-button text icon="delete" caret>Delete</ribbon-button>
    <ribbon-button text icon="format" caret>Format</ribbon-button>
  </div>
</ribbon-group>
<ribbon-group class="editing" label="Editing">
  <div class="rows three">
    <ribbon-button icon="sum" caret aria-label="AutoSum"></ribbon-button>
    <ribbon-button icon="filldown" caret aria-label="Fill"></ribbon-button>
    <ribbon-button icon="erase" caret aria-label="Clear"></ribbon-button>
  </div>
  <div class="large">
    <ribbon-button large icon="sort"><span class="two">Sort &amp;<span>Filter<app-icon name="caret"></app-icon></span></span></ribbon-button>
    <ribbon-button large icon="find"><span class="two">Find &amp;<span>Select<app-icon name="caret"></app-icon></span></span></ribbon-button>
  </div>
</ribbon-group>`;
  }
}
customElements.define("excel-ribbon", ExcelRibbon);

class FormulaBar extends AppElement {
  render() {
    return `
<style>
:host {
  display: flex;
  height: 15px;
  padding-top: 1px;
  border-bottom: 1px solid #8b9097;
  background: #fff;
  color: #22262b;
  font-size: 9px;
}
input { min-width: 0; box-sizing: border-box; border: 0; padding: 0 6px; background: none; font: inherit; color: inherit; }
.name { width: 100px; text-align: center; }
.formula { flex: 1; border-left: 1px solid #a9adb3; }
button { display: flex; align-items: center; border: 0; padding: 0 3px; background: none; }
.tools {
  display: flex;
  flex: 0 0 61px;
  justify-content: flex-end;
  border-radius: 8px 0 0 8px;
  border: 1px solid #c0c4c9;
  border-right: 0;
  background: #e3e5e8;
  box-sizing: border-box;
}
.tools::before { content: ""; width: 6px; height: 4px; margin: 3px auto 0 4px; border-radius: 3px; background: #b4b8bd; }
.expand { border: 1px solid #b4b8bd; background: #eceef0; padding: 0 1px; }
</style>
<input class="name" aria-label="Name Box" value="D1">
<button aria-label="Names"><app-icon name="caret"></app-icon></button>
<div class="tools"><button aria-label="Insert Function"><app-icon name="fx"></app-icon></button></div>
<input class="formula" aria-label="Formula" value="=Example">
<button class="expand" aria-label="Expand Formula Bar"><app-icon name="down"></app-icon></button>`;
  }
}
customElements.define("formula-bar", FormulaBar);

class SheetGrid extends AppElement {
  static names = ["navitend", "The Point", "Screencast", "Demo", "Example", "Range", "Name", "Excel"];

  cell(column, row) {
    const name = SheetGrid.names[row];
    if (!name || (column !== "A" && column !== "D")) return `<td></td>`;
    if (column === "A") return `<td>${name}</td>`;
    if (row === 0) return `<td class="anchor">${name}<span class="marquee"><app-icon name="autofill"></app-icon></span></td>`;
    return `<td class="selected">${name}</td>`;
  }

  render() {
    const columns = [..."ABCDEFGHIJKLMNOPQ"];
    const rows = Array.from({ length: 30 }, (_, row) => `
<tr><th scope="row"${row < 8 ? ` class="hot"` : ""}>${row + 1}</th>${columns.map((column) => this.cell(column, row)).join("")}</tr>`);
    return `
<style>
:host { display: flex; background: #fdfdfe; border-top: 3px solid #d9dce0; overflow: hidden; color: #16181b; }
.view { flex: 1; overflow: hidden; min-width: 0; }
table { width: 783px; table-layout: fixed; border-collapse: separate; border-spacing: 0; }
.heads { width: 18px; }
th, td { box-sizing: border-box; height: 14px; padding: 0; border: 0 solid #d0d2d6; border-width: 0 1px 1px 0; line-height: 13px; }
th { font-size: 9px; font-weight: 400; color: #35393f; background: #e3e5e8; border-color: #b0b4ba; overflow: hidden; }
thead th:first-child { line-height: 0; text-align: right; }
.hot { background: #f7cf55; border-color: #c99f33; color: #222; }
td { font-family: Lato, "Noto Sans", sans-serif; font-size: 10px; white-space: nowrap; padding-left: 1px; }
.selected { background: #b5d3f4; border-color: #a5c3e4; }
.anchor { position: relative; }
.marquee {
  position: absolute;
  top: -1px;
  left: -1px;
  width: 46px;
  height: 114px;
  box-sizing: border-box;
  border: 2px solid #0c0e12;
  pointer-events: none;
}
.marquee::after { content: ""; position: absolute; right: -3px; bottom: -3px; width: 3px; height: 3px; background: #0c0e12; border: 1px solid #fff; border-width: 1px 0 0 1px; }
.marquee app-icon { position: absolute; left: 100%; top: 100%; margin: 2px; }
.scroll { flex: 0 0 10px; display: flex; flex-direction: column; align-items: center; background: #e6e8eb; }
.split { width: 8px; height: 3px; margin-top: 1px; border: 1px solid #7d8288; background: #fff; }
.scroll button { display: flex; width: 10px; height: 12px; border: 0; padding: 0; align-items: center; justify-content: center; background: none; }
.thumb { flex: 1; width: 8px; margin-bottom: 12px; border: 1px solid #8f949b; background: linear-gradient(90deg, #f8f8f9, #dfe1e4); display: flex; align-items: center; justify-content: center; }
.thumb::after { content: ""; width: 4px; height: 4px; background: repeating-linear-gradient(#777 0 1px, transparent 1px 2px); }
</style>
<div class="view">
<table>
<colgroup><col class="heads">${columns.map(() => `<col>`).join("")}</colgroup>
<thead><tr><th><app-icon name="corner"></app-icon></th>${columns.map((column) => `<th scope="col"${column === "D" ? ` class="hot"` : ""}>${column}</th>`).join("")}</tr></thead>
<tbody>${rows.join("")}</tbody>
</table>
</div>
<div class="scroll">
  <span class="split"></span>
  <button aria-label="Scroll up"><app-icon name="up"></app-icon></button>
  <span class="thumb"></span>
  <button aria-label="Scroll down"><app-icon name="down"></app-icon></button>
</div>`;
  }
}
customElements.define("sheet-grid", SheetGrid);

class SheetTabs extends AppElement {
  render() {
    return `
<style>
:host { display: flex; height: 10px; background: #dfe2e5; border-top: 1px solid #a2a6ac; border-bottom: 1px solid #969ba1; font-size: 9px; }
button { display: flex; align-items: center; justify-content: center; border: 0; padding: 0; font: inherit; color: inherit; background: none; }
.nav { display: flex; width: 44px; box-sizing: border-box; gap: 5px; padding-left: 4px; }
.tab { padding: 0 2px; }
.chart { border: 1px solid #b0b4b9; border-width: 0 1px; padding: 0 4px 0 7px; }
.on { background: #fdfdfe; font-weight: 700; padding: 0 2px 0 6px; }
.slash { width: 1px; transform: skewX(-40deg); background: #8f949a; margin: 0 4px; }
.bar { display: flex; flex: 0 0 321px; align-items: stretch; margin-left: auto; }
.bar button { width: 10px; }
.split { width: 3px; border: 1px solid #7b8086; background: #fff; }
.thumb { flex: 1; margin: 0 19px 0 2px; border: 1px solid #8f949b; background: linear-gradient(#f8f8f9, #dfe1e4); display: flex; align-items: center; justify-content: center; }
.thumb::after { content: ""; width: 5px; height: 5px; background: repeating-linear-gradient(90deg, #777 0 1px, transparent 1px 2px); }
.end { width: 11px; }
</style>
<div class="nav">
  <button aria-label="First sheet"><app-icon name="first"></app-icon></button>
  <button aria-label="Previous sheet"><app-icon name="prev"></app-icon></button>
  <button aria-label="Next sheet"><app-icon name="next"></app-icon></button>
  <button aria-label="Last sheet"><app-icon name="last"></app-icon></button>
</div>
<button class="tab chart">Chart1</button>
<button class="tab on">Sheet1</button><span class="slash"></span>
<button class="tab">Sheet2</button><span class="slash"></span>
<button class="tab">Sheet3</button><span class="slash"></span>
<button class="tab" aria-label="Insert Worksheet"><app-icon name="newsheet"></app-icon></button><span class="slash"></span>
<div class="bar">
  <span class="split"></span>
  <button aria-label="Scroll left"><app-icon name="prev"></app-icon></button>
  <span class="thumb"></span>
  <button aria-label="Scroll right"><app-icon name="next"></app-icon></button>
  <span class="split"></span>
  <span class="end"></span>
</div>`;
  }
}
customElements.define("sheet-tabs", SheetTabs);

class StatusBar extends AppElement {
  render() {
    return `
<style>
:host { display: flex; align-items: center; height: 15px; background: linear-gradient(#f1f2f4, #d5d8db 50%, #c3c6ca); padding-left: 6px; }
button { display: flex; align-items: center; justify-content: center; border: 0; padding: 0; background: none; }
.sep { width: 1px; height: 12px; margin: 0 6px; background: #a5a9af; }
.count { margin-left: auto; }
.count + .sep { margin-right: 3px; }
.view { width: 13px; height: 13px; box-sizing: border-box; }
.on { border: 1px solid #c29b35; background: #fbe08a; }
.zoom { margin: 0 5px 0 6px; }
input { appearance: none; width: 70px; height: 10px; margin: 0; background: linear-gradient(#8a8e94, #8a8e94) center / 100% 1px no-repeat; }
input::-webkit-slider-thumb {
  appearance: none;
  box-sizing: border-box;
  width: 7px;
  height: 9px;
  border: 1px solid #62666c;
  border-radius: 1px 1px 4px 4px;
  background: #f7f8f9;
}
.grip { align-self: flex-end; margin-left: 5px; }
</style>
<span>Ready</span><span class="sep"></span><button aria-label="Record Macro"><app-icon name="macro"></app-icon></button><span class="sep"></span>
<span class="count">Count: 8</span><span class="sep"></span>
<button class="view on" aria-label="Normal"><app-icon name="normal"></app-icon></button>
<button class="view" aria-label="Page Layout"><app-icon name="layout"></app-icon></button>
<button class="view" aria-label="Page Break Preview"><app-icon name="breaks"></app-icon></button>
<span class="zoom">100%</span>
<button aria-label="Zoom Out"><app-icon name="minus"></app-icon></button>
<input type="range" aria-label="Zoom" min="0" max="200" value="100">
<button aria-label="Zoom In"><app-icon name="plus"></app-icon></button>
<app-icon class="grip" name="grip"></app-icon>`;
  }
}
customElements.define("status-bar", StatusBar);

class TaskBar extends AppElement {
  render() {
    const pinned = { Chrome: "chrome", Outlook: "outlook", Word: "word", Explorer: "explorer", "Media Player": "media", Notepad: "notepad" };
    const running = { Camtasia: "camtasia", Excel: "exceltask" };
    const tray = ["record", "flag", "usb", "sync", "nvidia", "network", "sound"];
    const buttons = (list, cls) => Object.entries(list).map(([label, icon]) => `<button class="${cls}" aria-label="${label}"><app-icon name="${icon}"></app-icon></button>`).join("");
    return `
<style>
:host {
  display: flex;
  position: relative;
  height: 27px;
  border-top: 1px solid #7fa9cb;
  box-shadow: 0 -1px #1b3f66;
  color: #fff;
  background: linear-gradient(#ffffff22, transparent 50%), linear-gradient(90deg, #2c6790ee, #3a83b6ee 14%, #3a80b8ee 50%, #28568bee 72%, #163a69ee);
}
button { display: flex; align-items: center; justify-content: center; flex: 0 0 42px; margin-right: 2px; padding: 0; border: 0; background: none; }
.start { flex-basis: 38px; margin-right: 3px; }
.pinned { margin-right: 1px; }
.pinned:nth-of-type(odd) { margin-right: 2px; }
.running { flex-basis: 41px; border: 1px solid #bcd9ec; border-radius: 2px; background: linear-gradient(#a5c5dd99, #5e9bc999); }
.running + .running { background: linear-gradient(#dcebf5cc, #a5c9e0cc); }
.tray { display: flex; align-items: center; gap: 6px; margin-left: auto; }
time { width: 46px; margin: 0 3px 0 4px; text-align: center; line-height: 12px; padding-top: 2px; }
.peek { flex: 0 0 9px; margin: 0; border: 1px solid #6e8fb3; background: linear-gradient(#5a7da5, #274b78); }
</style>
<button class="start" aria-label="Start"><app-icon name="start"></app-icon></button>
${buttons(pinned, "pinned")}${buttons(running, "running")}
<div class="tray">${tray.map((icon) => `<app-icon name="${icon}"></app-icon>`).join("")}</div>
<time datetime="2012-03-13T09:07">9:07 AM<br>3/13/2012</time>
<button class="peek" aria-label="Show desktop"></button>`;
  }
}
customElements.define("task-bar", TaskBar);
</script>
</body>
</html>
